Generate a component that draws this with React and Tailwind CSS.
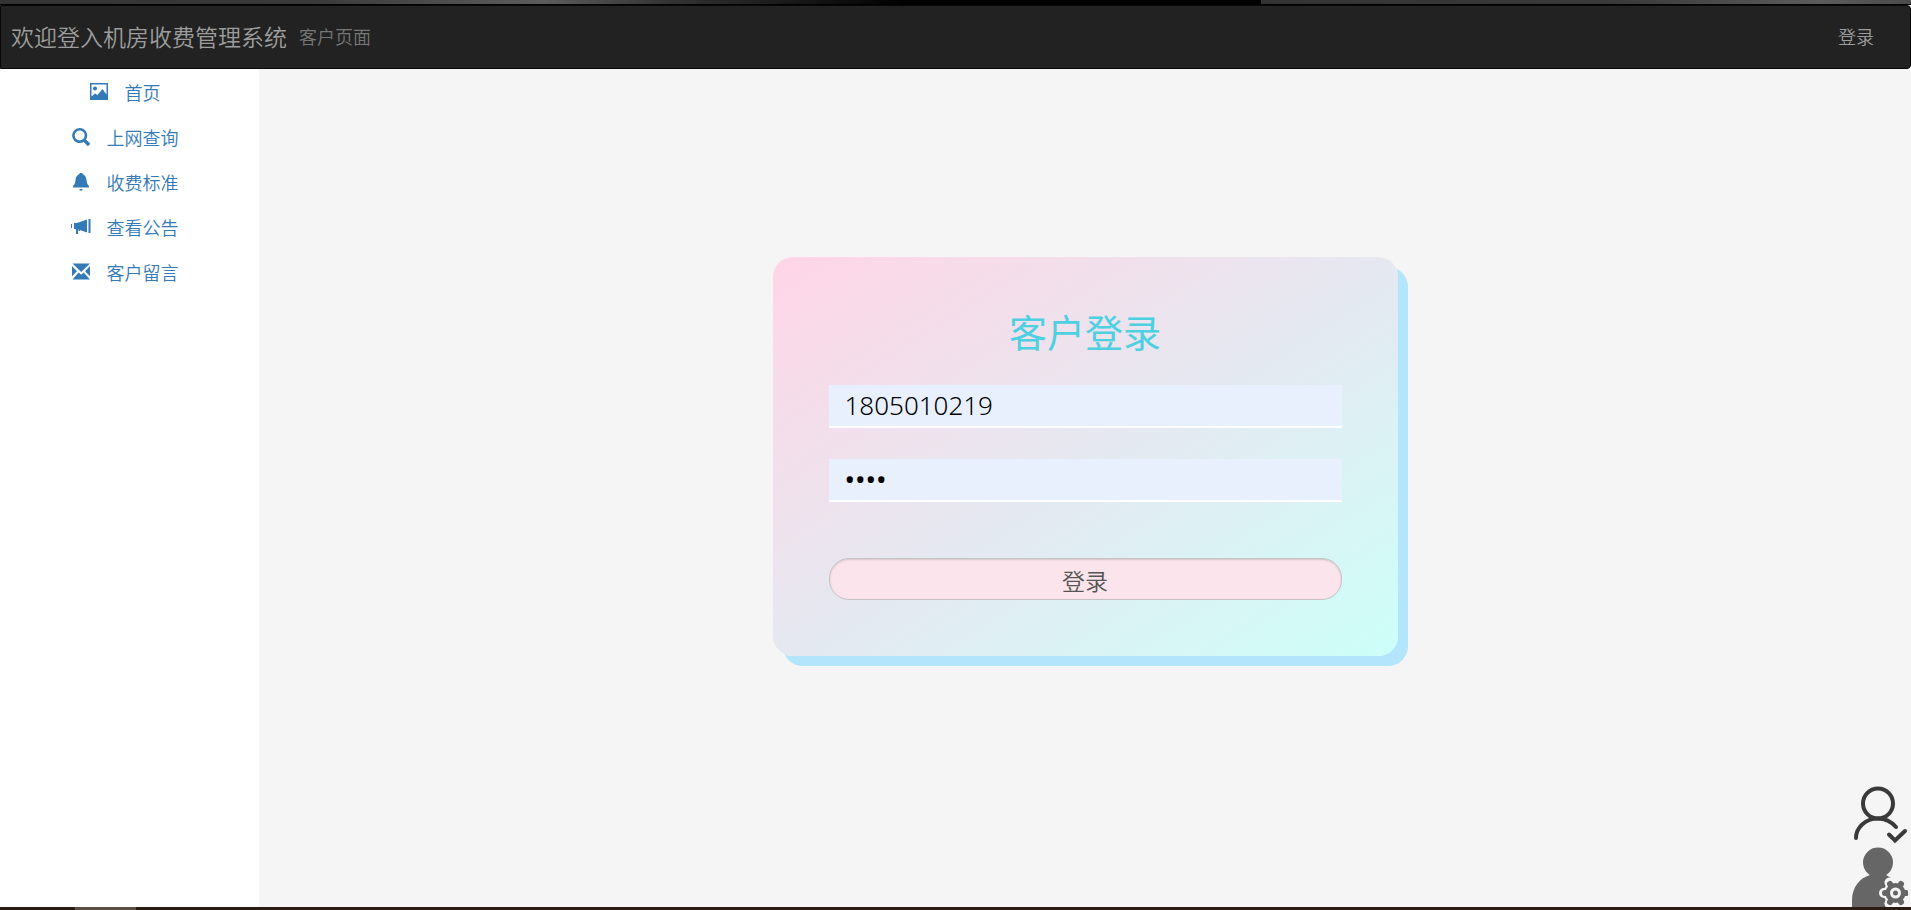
import React, { useState } from 'react';

const menuItems = [
    {
        label: '首页',
        icon: (
            <path fillRule="evenodd" d="M1 1h18v17H1V1zm1.500 1.500v12l3.500-3 2.500 1.500 5-6 4 5.500V2.500h-15zM6 4.500a2 2 0 1 1 0 4 2 2 0 0 1 0-4z" />
        ),
    },
    {
        label: '上网查询',
        icon: (
            <path fillRule="evenodd" d="M8.700 1a7.500 7.500 0 1 0 3.900 13.900l4.300 4.300 2.400-2.400-4.300-4.300A7.500 7.500 0 0 0 8.700 1zm0 2.500a5 5 0 1 1 0 10 5 5 0 0 1 0-10z" />
        ),
    },
    {
        label: '收费标准',
        icon: (
            <path d="M10 1c1.100 0 1.700.6 1.900 1.200 2.300 1 3.300 3 3.600 5.800.3 3.200 1 4.700 2.500 6V15.500H2V14c1.500-1.300 2.200-2.800 2.500-6 .3-2.800 1.300-4.800 3.600-5.800C8.300 1.600 8.900 1 10 1zM8.300 17h3.400a1.700 1.700 0 0 1-3.400 0z" />
        ),
    },
    {
        label: '查看公告',
        icon: (
            <path d="M0 7h1v4H0V7zM3 6h3v6h1v5H5v-5H3V6zM6 6l10-3.500v13L6 12V6zM7.500 12h1.500v2H7.500v-2zM17.500 2h2v14h-2V2z" />
        ),
    },
    {
        label: '客户留言',
        icon: (
            <path d="M1.500 1.500h17.500L10.200 10 1.500 1.500zM1 4l5 5.200-5 5V4zM19 4v10.200l-5-5L19 4zM7.500 10.500l2.700 2.300 2.500-2.300 6.300 7H1.500l6-7z" />
        ),
    },
];

function Navbar() {
    return (
        <div className="bg-white">
            <nav className="flex items-center h-16 rounded-r bg-[#222222] border border-[#080808] text-[#9d9d9d]">
                <a href="#" className="pl-[10px] text-[23px]">欢迎登入机房收费管理系统</a>
                <a href="#" className="ml-3 text-[18px] text-[#777777]">客户页面</a>
                <a href="#" className="ml-auto mr-9 text-[18px]">登录</a>
            </nav>
        </div>
    );
}

function Sidebar() {
    return (
        <aside className="w-[259px] shrink-0 pt-[2px] bg-white">
            <ul className="text-[18px] text-[#337ab7]">
                {menuItems.map(item => (
                    <li key={item.label}>
                        <a href="#" className="flex items-center justify-center gap-4 h-[45px] pr-[10px]">
                            <svg viewBox="0 0 20 20" className="w-5 h-5 mb-1" fill="currentColor">{item.icon}</svg>
                            {item.label}
                        </a>
                    </li>
                ))}
            </ul>
        </aside>
    );
}

function LoginForm() {
    const [account, setAccount] = useState('1805010219');
    const [password, setPassword] = useState('1234');

    return (
        <form
            className="w-[625px] mt-[188px] px-14 pt-12 pb-14 rounded-[20px] bg-linear-to-br from-[#ffd5e6] via-[#e5e8f0] to-[#ccfff9] shadow-[10px_10px_0_#b3e5fc]"
            onSubmit={e => e.preventDefault()}
        >
            <h2 className="text-center text-[38px] leading-[54px] font-normal text-[#4dd0e1]">客户登录</h2>
            <input
                type="text"
                aria-label="账号"
                className="block w-full h-[43px] mt-[26px] px-4 pb-[2px] border-b-2 border-white bg-[#e8f0fe] text-[26px] text-black outline-none"
                value={account}
                onChange={e => setAccount(e.target.value)}
            />
            <input
                type="password"
                aria-label="密码"
                className="block w-full h-[43px] mt-[31px] px-4 pb-[2px] border-b-2 border-white bg-[#e8f0fe] text-[28px] font-normal text-black outline-none"
                value={password}
                onChange={e => setPassword(e.target.value)}
            />
            <button
                type="submit"
                className="block w-full h-[42px] mt-14 pt-1 rounded-[20px] border border-[#c4c4c4] bg-[#fce4ec] text-[23px] text-[#555555] shadow-[inset_0_1px_2px_rgba(0,0,0,0.15)]"
            >
                登录
            </button>
        </form>
    );
}

function UserLinks() {
    return (
        <div className="fixed right-[3px] bottom-[3px] flex flex-col">
            <a href="#" aria-label="客户登录">
                <svg viewBox="0 0 56 64" className="w-14 h-16" fill="none" stroke="#3a3a3a" strokeWidth="4" strokeLinecap="round">
                    <circle cx="26" cy="20.500" r="15" />
                    <path d="M4 55c0-10 9-19.500 22-19.500 8 0 14 4 18 8.500M37 51.500l6 6L53 48" />
                </svg>
            </a>
            <a href="#" aria-label="管理员登录">
                <svg viewBox="0 0 56 60" className="w-14 h-[60px] overflow-hidden">
                    <circle cx="26" cy="15.500" r="15" fill="#666666" />
                    <path d="M0 60V53C0 40 8 31 18 28h16l5 3v29z" fill="#666666" />
                    {/* gear with a light outline cut out of the shoulder */}
                    <g stroke="#f5f5f5" strokeWidth="10" strokeLinecap="round">
                        <path d="M32 46h23M37.500 35.500l12 21M49.500 35.500l-12 21" />
                        <circle cx="43.500" cy="46" r="7" fill="#f5f5f5" />
                    </g>
                    <g stroke="#666666" strokeWidth="6" strokeLinecap="round">
                        <path d="M33 46h21M38 37l11 18M49 37l-11 18" />
                        <circle cx="43.500" cy="46" r="7" fill="#666666" />
                    </g>
                    <circle cx="43.500" cy="46" r="4" fill="#666666" stroke="#f5f5f5" strokeWidth="3" />
                </svg>
            </a>
        </div>
    );
}

function App() {
    return (
        <div className="flex flex-col min-h-screen bg-black font-['Noto_Sans','Noto_Sans_CJK_SC',sans-serif] font-[350]">
            <div className="flex h-[5px] border-b border-black">
                <div className="w-[66%] bg-[linear-gradient(to_right,#333333_0%,#3a3a3a_25%,#5c5c5c_43%,#333333_53%,#000000_72%)]" />
                <div className="grow bg-[linear-gradient(to_right,#333333_0%,#3a3a3a_55%,#5c5c5c_86%,#4a4a4a_100%)]" />
            </div>
            <Navbar />
            <div className="flex grow">
                <Sidebar />
                <main className="flex grow items-start justify-center bg-[#f5f5f5]">
                    <LoginForm />
                </main>
            </div>
            <div className="h-[3px] pl-[75px] bg-[#2a1d17]">
                <div className="w-[61px] h-full bg-[#594d46]" />
            </div>
            <UserLinks />
        </div>
    );
}

export default App;
